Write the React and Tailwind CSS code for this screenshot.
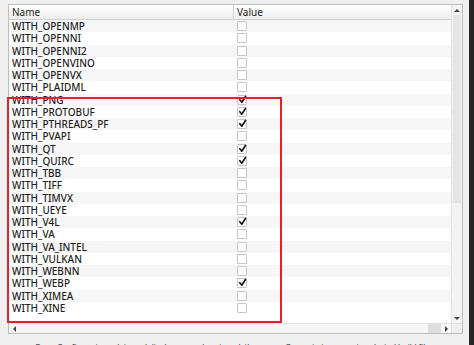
const rows = [
  ["WITH_OPENMP", false],
  ["WITH_OPENNI", false],
  ["WITH_OPENNI2", false],
  ["WITH_OPENVINO", false],
  ["WITH_OPENVX", false],
  ["WITH_PLAIDML", false],
  ["WITH_PNG", true],
  ["WITH_PROTOBUF", true],
  ["WITH_PTHREADS_PF", true],
  ["WITH_PVAPI", false],
  ["WITH_QT", true],
  ["WITH_QUIRC", true],
  ["WITH_TBB", false],
  ["WITH_TIFF", false],
  ["WITH_TIMVX", false],
  ["WITH_UEYE", false],
  ["WITH_V4L", true],
  ["WITH_VA", false],
  ["WITH_VA_INTEL", false],
  ["WITH_VULKAN", false],
  ["WITH_WEBNN", false],
  ["WITH_WEBP", true],
  ["WITH_XIMEA", false],
  ["WITH_XINE", false],
];

const CheckBox = ({ checked }) => (
  <div className="relative w-[10px] h-[10px] border border-[#c6c6c6] bg-white rounded-[1px]">
    {checked && (
      <svg
        className="absolute left-[0px] top-[-1px] w-[9px] h-[9px]"
        viewBox="0 0 10 10"
        fill="none"
        stroke="#111"
        strokeWidth={1.8}
        strokeLinecap="round"
        strokeLinejoin="round"
      >
        <path d="M2 5.2L4.2 8L8.3 1.6" />
      </svg>
    )}
  </div>
);

export default function App() {
  return (
    <div
      className="relative w-[474px] h-[345px] overflow-hidden bg-[#f0f0f0] flex text-[10px] text-[#1e1e1e]"
      style={{ fontFamily: '"Noto Sans", "DejaVu Sans", sans-serif' }}
    >
      <div className="w-[469px] flex flex-col pt-[4px] pl-[8px]">
        {/* tree frame */}
        <div className="w-[455px] h-[330px] shrink-0 border border-[#bdbdbd] bg-white flex flex-col">
          <div className="flex flex-1 min-h-0">
            <div className="flex-1 flex flex-col">
              {/* header */}
              <div className="h-[15px] flex bg-gradient-to-b from-[#ffffff] to-[#ededed] border-b border-[#cfcfcf] leading-[14px]">
                <div className="w-[225px] pl-[3px] border-r border-[#d6d6d6]">Name</div>
                <div className="pl-[3px]">Value</div>
              </div>
              {rows.map(([name, checked], i) => (
                <div
                  key={name}
                  className={`h-[12.25px] flex items-center overflow-hidden ${
                    i % 2 === 0 ? "bg-[#f6f6f6]" : "bg-white"
                  }`}
                >
                  <div className="w-[225px] pl-[3px] leading-[12px] font-medium">{name}</div>
                  <div className="pl-[3px]">
                    <CheckBox checked={checked} />
                  </div>
                </div>
              ))}
            </div>
            {/* vertical scrollbar */}
            <div className="w-[11px] flex flex-col bg-[#f3f3f3] border-l border-[#e2e2e2]">
              <div className="h-[10px] flex items-center justify-center">
                <div className="w-0 h-0 border-l-[3px] border-r-[3px] border-b-[3px] border-l-transparent border-r-transparent border-b-[#444]" />
              </div>
              <div className="h-[188px] bg-[#e4e4e4] mx-[1px]" />
              <div className="flex-1" />
              <div className="h-[10px] flex items-center justify-center">
                <div className="w-0 h-0 border-l-[3px] border-r-[3px] border-t-[3px] border-l-transparent border-r-transparent border-t-[#444]" />
              </div>
            </div>
          </div>
          {/* horizontal scrollbar */}
          <div className="h-[10px] flex border-t border-[#e0e0e0] bg-[#f6f6f6]">
            <div className="w-[10px] flex items-center justify-center">
              <div className="w-0 h-0 border-t-[3px] border-b-[3px] border-r-[3px] border-t-transparent border-b-transparent border-r-[#444]" />
            </div>
            <div className="flex-1" />
            <div className="w-[13px] bg-[#dedede]" />
            <div className="w-[10px] flex items-center justify-center">
              <div className="w-0 h-0 border-t-[3px] border-b-[3px] border-l-[3px] border-t-transparent border-b-transparent border-l-[#444]" />
            </div>
            <div className="w-[11px] bg-[#efefef] border-l border-[#e0e0e0]" />
          </div>
        </div>
        <div className="pt-[6px] w-[455px] shrink-0 text-center whitespace-nowrap leading-[12px] text-[7.8px] text-[#222]">
          Press Configure to update and display new values in red, then press Generate to generate selected build files.
        </div>
      </div>
      <div className="w-[5px] bg-[#262626]" />
      {/* red highlight */}
      <div className="absolute left-[7px] top-[97px] w-[275px] h-[226px] border-2 border-[#d9252e]" />
    </div>
  );
}
